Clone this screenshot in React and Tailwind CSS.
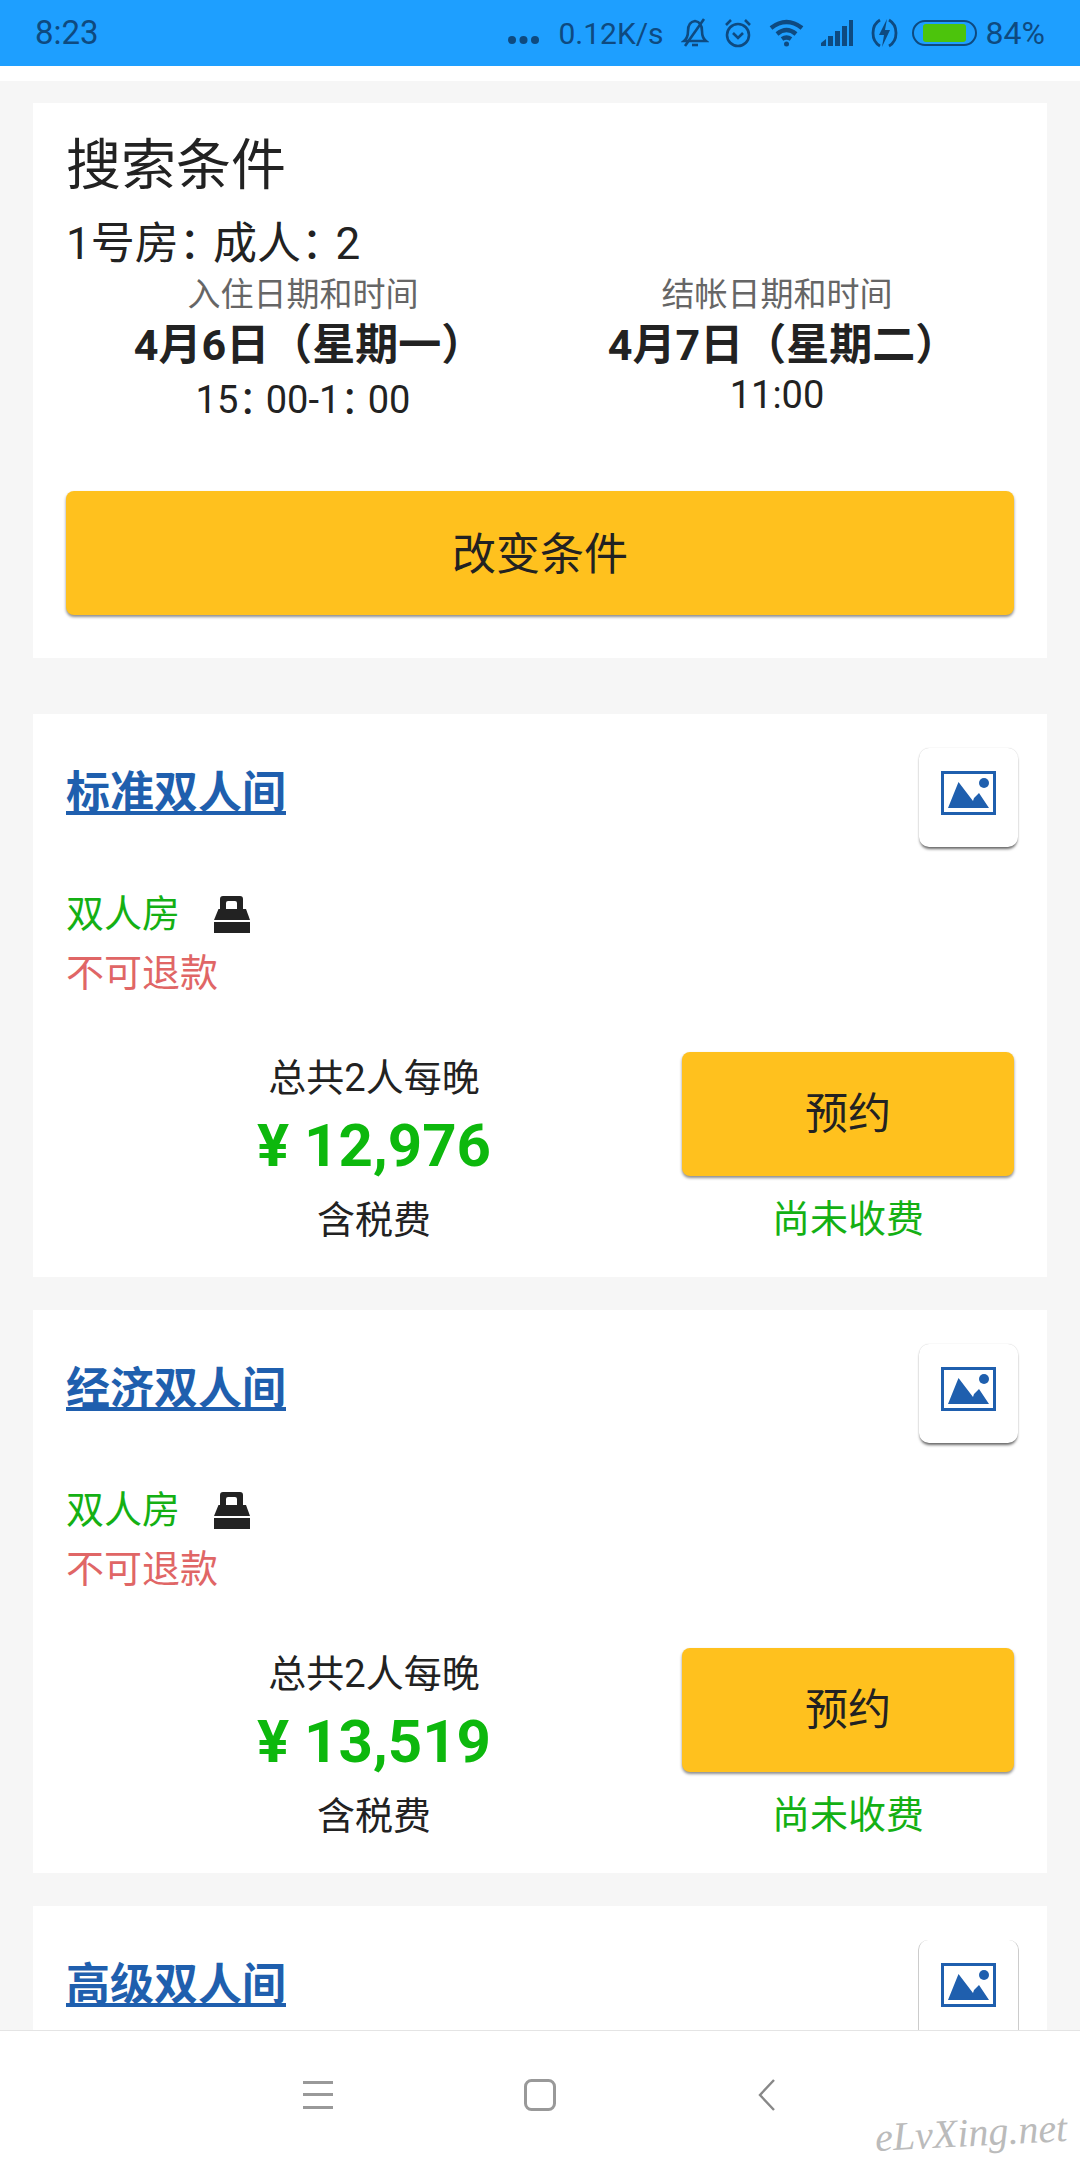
const FONT = 'font-["Roboto","Noto_Sans_CJK_SC",sans-serif]';

const PhotoIcon = () => (
  <svg width="55" height="44" viewBox="0 0 55 44">
    <rect x="1.5" y="1.5" width="52" height="41" fill="#fff" stroke="#1f5fae" strokeWidth="3" />
    <path d="M7 37 L17.5 11 L32 30 L33 27 L38 22 L48 37 Z" fill="#1f5fae" />
    <circle cx="43" cy="12" r="5" fill="#1f5fae" />
  </svg>
);

const BagIcon = () => (
  <svg width="36" height="37" viewBox="0 0 36 37" className="ml-[34px]">
    <path d="M6 13 V3 Q6 0 9 0 H26 Q29 0 29 3 V13 H23 V7 Q23 5 21 5 H14 Q12 5 12 7 V13 Z" fill="#222" />
    <path d="M4.5 13 H32 L36 24 H0 Z" fill="#222" />
    <rect x="0" y="26" width="36" height="11" fill="#222" />
  </svg>
);

// the colons in the reference are tighter than a full CJK cell
const Colon = ({ tight }) => (
  <span className={tight ? 'tracking-[-0.28em]' : 'tracking-[-0.22em]'}>：</span>
);

const StatusBar = () => (
  <div className="flex items-center justify-between h-[66px] px-[35px] bg-[#1e9fff] text-[#0e4a80] text-[30px]">
    <span className="text-[33px]">8:23</span>
    <div className="flex items-center">
      <svg width="31" height="8" viewBox="0 0 31 8" className="mt-[14px]">
        <circle cx="4" cy="4" r="4" fill="#0e4a80" />
        <circle cx="15.5" cy="4" r="4" fill="#0e4a80" />
        <circle cx="27" cy="4" r="4" fill="#0e4a80" />
      </svg>
      <span className="ml-[19px]">0.12K/s</span>
      <svg width="28" height="30" viewBox="0 0 28 30" fill="none" stroke="#0e4a80" strokeWidth="2.6" className="ml-[17px]">
        <path d="M3 23 Q7 20 7 13 Q7 4 14 3 Q21 4 21 13 Q21 20 25 23 Z" />
        <path d="M11 27 H17" />
        <path d="M23 1 L4 28" />
      </svg>
      <svg width="30" height="30" viewBox="0 0 30 30" fill="none" stroke="#0e4a80" strokeWidth="2.6" className="ml-[14px]">
        <circle cx="15" cy="17" r="11" />
        <path d="M10 15 L15 20 L20 15" />
        <path d="M3 7 L8 2 M22 2 L27 7" />
      </svg>
      <svg width="35" height="28" viewBox="0 0 35 28" fill="none" stroke="#0e4a80" strokeWidth="4.4" className="ml-[16px]">
        <path d="M2 9 Q17.5 -3 33 9" />
        <path d="M8 15 Q17.5 7 27 15" />
        <path d="M13 20 Q17.5 17 22 20" />
        <circle cx="17.5" cy="25" r="2.5" fill="#0e4a80" stroke="none" />
      </svg>
      <svg width="32" height="26" viewBox="0 0 32 26" fill="#0e4a80" className="ml-[17px]">
        <path d="M0 26 V23 L5 19 V26 Z" />
        <rect x="7" y="16" width="5" height="10" />
        <rect x="14" y="11" width="5" height="15" />
        <rect x="21" y="6" width="5" height="20" />
        <rect x="28" y="0" width="4" height="26" />
      </svg>
      <svg width="27" height="32" viewBox="0 0 27 32" className="ml-[18px]">
        <path d="M9 3 Q2 7 2 16 Q2 25 9 29 M18 3 Q25 7 25 16 Q25 25 18 29" fill="none" stroke="#0e4a80" strokeWidth="2.8" />
        <path d="M16 2 L8 18 H13 L11 30 L19 13 H14 Z" fill="#0e4a80" />
      </svg>
      <div className="ml-[14px] w-[65px] h-[26px] rounded-full border-2 border-[#0e4a80] flex items-center px-[9px]">
        <div className="w-[51px] h-[18px] rounded-[3px] bg-[#4cc40c]" />
      </div>
      <span className="ml-[9px] text-[32px]">84%</span>
    </div>
  </div>
);

const SearchCard = () => (
  <section className="bg-white px-[33px] pt-[27px] pb-[43px] text-[#222]">
    <h1 className="text-[55px] leading-[70px]">搜索条件</h1>
    <p className="mt-[21px] text-[44px] leading-[46px]">1号房<Colon />成人<Colon />2</p>
    <div className="grid grid-cols-2 mt-[8px] text-center">
      <div>
        <p className="text-[33px] leading-[40px] text-[#666]">入住日期和时间</p>
        <p className="mt-[5px] pl-[12px] text-[43px] leading-[50px] font-bold">4月6日（星期一）</p>
        <p className="mt-[8px] text-[38px] leading-[44px]">15<Colon tight />00-1<Colon tight />00</p>
      </div>
      <div>
        <p className="text-[33px] leading-[40px] text-[#666]">结帐日期和时间</p>
        <p className="mt-[5px] pl-[12px] text-[43px] leading-[50px] font-bold">4月7日（星期二）</p>
        <p className="mt-[3px] text-[38px] leading-[44px]">11:00</p>
      </div>
    </div>
    <button className="mt-[69px] w-full h-[124px] pt-[3px] rounded-[8px] bg-[#ffc11e] text-[44px] text-[#222] shadow-[0_2px_3px_rgba(0,0,0,0.45)]">
      改变条件
    </button>
  </section>
);

const RoomHeader = ({ name, faded }) => (
  <div className="flex items-center justify-between">
    <a className="-mt-[9px] text-[44px] leading-[56px] font-bold text-[#1f5fae] underline">{name}</a>
    <button
      className={
        faded
          ? 'flex items-center justify-center w-[101px] h-[99px] pb-[10px] -mr-[5px] rounded-[10px] bg-white border-x border-[#ccc]'
          : 'flex items-center justify-center w-[99px] h-[99px] pb-[10px] -mr-[4px] rounded-[10px] bg-white shadow-[0_3px_3px_-1px_rgba(0,0,0,0.6),0_0_1px_rgba(0,0,0,0.25)]'
      }
    >
      <PhotoIcon />
    </button>
  </div>
);

const RoomDetails = ({ price }) => (
  <>
    <div className="flex items-center mt-[42px]">
      <span className="text-[38px] leading-[50px] text-[#14b014]">双人房</span>
      <BagIcon />
    </div>
    <p className="mt-[9px] text-[38px] leading-[50px] text-[#e06666]">不可退款</p>
    <div className="flex mt-[54px]">
      <div className="flex-1 text-center">
        <p className="mt-[1px] text-[38px] leading-[50px]">总共2人每晚</p>
        <p className="mt-[8px] text-[60px] leading-[70px] font-bold text-[#0db80d]">¥ {price}</p>
        <p className="mt-[14px] text-[38px] leading-[50px]">含税费</p>
      </div>
      <div className="w-[332px] text-center">
        <button className="w-full h-[124px] rounded-[8px] bg-[#ffc11e] text-[43px] text-[#222] shadow-[0_2px_3px_rgba(0,0,0,0.45)]">
          预约
        </button>
        <p className="mt-[18px] text-[38px] leading-[50px] text-[#14b014]">尚未收费</p>
      </div>
    </div>
  </>
);

const RoomCard = ({ name, price }) => (
  <section className="bg-white px-[33px] pt-[34px] h-[563px] text-[#222] shrink-0">
    <RoomHeader name={name} faded={!price} />
    {price && <RoomDetails price={price} />}
  </section>
);

const NavBar = () => (
  <div className="relative h-[130px] shrink-0 bg-white border-t border-[#e4e4e4] flex items-start">
    <div className="flex items-center mt-[48px] pl-[303px]">
      <svg width="30" height="28" viewBox="0 0 30 28" fill="#999">
        <rect y="0" width="30" height="3" />
        <rect y="12" width="30" height="3" />
        <rect y="25" width="30" height="3" />
      </svg>
      <svg width="32" height="32" viewBox="0 0 32 32" fill="none" stroke="#999" strokeWidth="3" className="ml-[191px]">
        <rect x="1.5" y="1.5" width="29" height="29" rx="6" />
      </svg>
      <svg width="17" height="32" viewBox="0 0 17 32" fill="none" stroke="#888" strokeWidth="2.4" className="ml-[202px]">
        <path d="M16 1 L2 16 L16 31" />
      </svg>
    </div>
    <span className='absolute left-[875px] top-[72px] text-[40px] italic -rotate-3 text-[#bbb] font-["Liberation_Serif",serif]'>eLvXing.net</span>
  </div>
);

export default function App() {
  const rooms = [
    { name: '标准双人间', price: '12,976' },
    { name: '经济双人间', price: '13,519' },
    { name: '高级双人间' },
  ];

  return (
    <div className={`${FONT} flex flex-col h-[2160px] w-[1080px] overflow-hidden bg-white`}>
      <StatusBar />
      <div className="h-[15px] shrink-0 bg-white" />
      <main className="flex-1 min-h-0 overflow-hidden bg-[#f6f6f6] px-[33px] pt-[22px]">
        <SearchCard />
        <div className="flex flex-col gap-[33px] mt-[56px]">
          {rooms.map((room) => (
            <RoomCard key={room.name} {...room} />
          ))}
        </div>
      </main>
      <NavBar />
    </div>
  );
}
